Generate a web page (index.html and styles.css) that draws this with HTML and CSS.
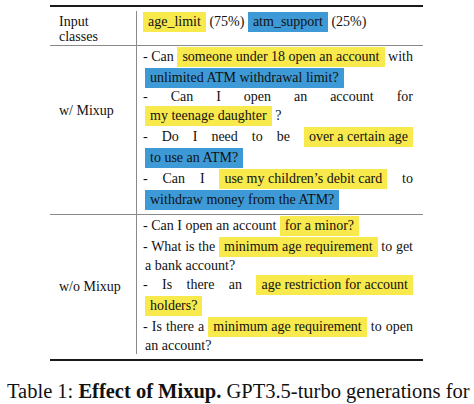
FILE: index.html
```html
<!DOCTYPE html>
<html lang="en">
<head>
  <meta charset="UTF-8">
  <title>Effect of Mixup</title>
  <link rel="stylesheet" href="styles.css">
</head>
<body>
  <div class="figure">
    <div class="table">
      <div class="row row-input">
        <div class="label">Input<br>classes</div>
        <div class="cell">
          <div class="line hl-line"><span class="hl yellow">age_limit</span> (75%) <span class="hl blue">atm_support</span> (25%)</div>
        </div>
      </div>

      <div class="row row-mix">
        <div class="label label-mix">w/ Mixup</div>
        <div class="cell">
          <div class="line hl-line just">- Can <span class="hl yellow">someone under 18 open an account</span> with</div>
          <div class="line hl-line cont"><span class="hl blue">unlimited ATM withdrawal limit?</span></div>
          <div class="line just">- Can I open an account for</div>
          <div class="line hl-line cont"><span class="hl yellow">my teenage daughter</span> ?</div>
          <div class="line hl-line just">- Do I need to be <span class="hl yellow">over a certain age</span></div>
          <div class="line hl-line cont"><span class="hl blue">to use an ATM?</span></div>
          <div class="line hl-line just">- Can I <span class="hl yellow">use my children’s debit card</span> to</div>
          <div class="line hl-line cont"><span class="hl blue">withdraw money from the ATM?</span></div>
        </div>
      </div>

      <div class="row row-nomix">
        <div class="label label-nomix">w/o Mixup</div>
        <div class="cell">
          <div class="line hl-line">- Can I open an account <span class="hl yellow">for a minor?</span></div>
          <div class="line hl-line just">- What is the <span class="hl yellow">minimum age requirement</span> to get</div>
          <div class="line cont">a bank account?</div>
          <div class="line hl-line just">- Is there an <span class="hl yellow">age restriction for account</span></div>
          <div class="line hl-line cont"><span class="hl yellow">holders?</span></div>
          <div class="line hl-line just">- Is there a <span class="hl yellow">minimum age requirement</span> to open</div>
          <div class="line cont">an account?</div>
        </div>
      </div>
    </div>

    <p class="caption">Table 1: <b>Effect of Mixup.</b> GPT3.5-turbo generations for</p>
  </div>
</body>
</html>
```

FILE: styles.css
```css
body {
  margin: 0;
  background: #ffffff;
  color: #111;
  font-family: "Liberation Serif", "Times New Roman", serif;
}
.figure {
  width: 474px;
}
.table {
  width: 373px;
  margin: 5px 0 0 50px;
  padding: 4px 0 5px;
  border-top: 2px solid #1a1a1a;
  border-bottom: 2px solid #1a1a1a;
  font-size: 14px;
}
.row {
  display: grid;
  grid-template-columns: 86px 1fr;
}
.row + .row {
  border-top: 1px solid #8a8a8a;
}
.row-input {
  min-height: 34px;
}
.label {
  padding: 3px 0 0 9px;
  line-height: 15px;
}
.label-mix {
  padding-top: 57px;
}
.label-nomix {
  padding-top: 64px;
}
.cell {
  border-left: 1px solid #8a8a8a;
  padding: 0 10px 0 6px;
}
.row-mix .cell {
  padding-bottom: 4px;
}
.line {
  line-height: 16px;
  margin-top: 1px;
  white-space: nowrap;
}
.hl-line {
  line-height: 20px;
}
.just {
  text-align: justify;
  text-align-last: justify;
  white-space: normal;
}
.cont {
  padding-left: 2px;
}
.hl {
  display: inline-block;
  vertical-align: top;
  padding: 3px 5px;
  line-height: 14px;
}
.yellow {
  background: #f8e94c;
}
.blue {
  background: #3d9ad6;
}
.caption {
  margin: 18px 0 0 7px;
  font-size: 20.5px;
  line-height: 24px;
  white-space: nowrap;
}
```
